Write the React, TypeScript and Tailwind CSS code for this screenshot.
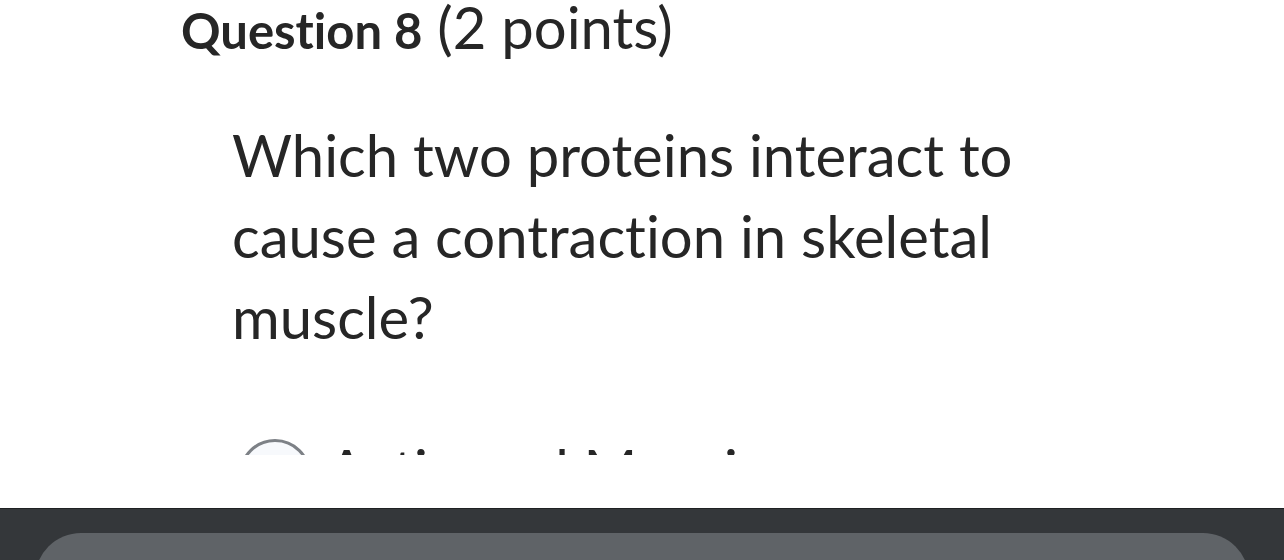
import React from 'react';

const App: React.FC = () => {
  return (
    <div className="w-[1284px] h-[560px] bg-white flex flex-col overflow-hidden font-['Lato','Noto_Sans',sans-serif] text-[#262626] [font-variant-ligatures:none]">
      {/* scrolling question area */}
      <div className="h-[455px] overflow-hidden">
        <h2 className="pl-[181px] -mt-[3px] text-[58px] leading-[60px]">
          <span className="font-bold text-[49px] leading-none">Question 8</span> <span>(2 points)</span>
        </h2>
        <p className="pl-[232px] pt-[57px] w-[1060px] text-[58px] leading-[81px]">
          Which two proteins interact to cause a contraction in skeletal muscle?
        </p>
        <div className="flex items-start gap-[16px] pl-[239px] pt-[82px]">
          <span className="block w-[72px] h-[72px] shrink-0 rounded-full border-[3px] border-[#7d8186] bg-[#f7f9fc]" />
          <span className="text-[58px] leading-none mt-[2px]">Actin and Myosin</span>
        </div>
      </div>

      <div className="h-[53px] bg-white" />

      {/* bottom browser bar */}
      <div className="h-[52px] bg-[#34373a] border-t border-[#1f2123] pt-[24px] px-[35px]">
        <div className="h-[60px] rounded-t-[46px] bg-[#5f6367]" />
      </div>
    </div>
  );
};

export default App;
